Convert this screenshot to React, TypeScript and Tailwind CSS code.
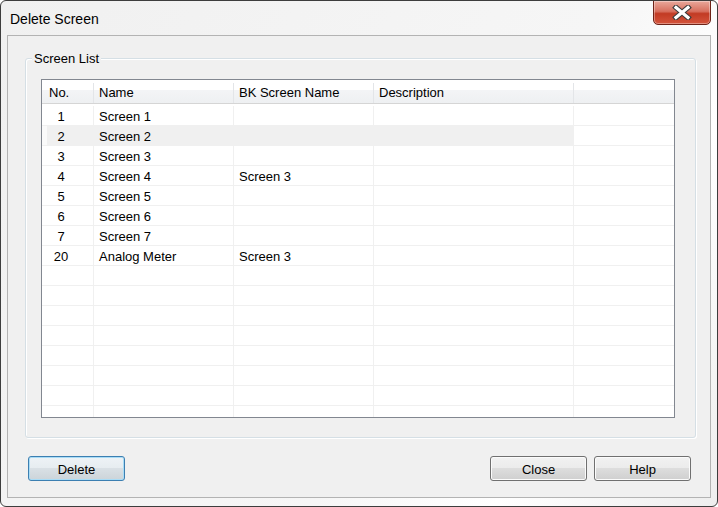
import React from 'react';

const rows = [
    { no: '1', name: 'Screen 1', bk: '' },
    { no: '2', name: 'Screen 2', bk: '', selected: true },
    { no: '3', name: 'Screen 3', bk: '' },
    { no: '4', name: 'Screen 4', bk: 'Screen 3' },
    { no: '5', name: 'Screen 5', bk: '' },
    { no: '6', name: 'Screen 6', bk: '' },
    { no: '7', name: 'Screen 7', bk: '' },
    { no: '20', name: 'Analog Meter', bk: 'Screen 3' },
];

const blanks = Array.from({ length: 8 }, (_, i) => ({ no: '', name: '', bk: '', key: i }));

function Button({ label, focused }: { label: string; focused?: boolean }) {
    return (
        <button
            className={`w-[97px] h-[25px] rounded-[3px] border text-[13px] text-black leading-none pt-[1px] ${focused
                ? 'border-[#3c7fb1] shadow-[inset_0_0_0_1px_#a9dcf6] bg-[linear-gradient(#eef3f6,#e6ecf0_50%,#d9e0e5_50%,#ccd4d9)]'
                : 'border-[#707070] shadow-[inset_0_0_0_1px_#fbfbfb] bg-[linear-gradient(#f2f2f2,#ebebeb_50%,#dddddd_50%,#cfcfcf)]'
                }`}
        >
            {label}
        </button>
    );
}

export default function App() {
    return (
        <div className="w-[718px] h-[507px] bg-white font-['Liberation_Sans',Arial,sans-serif]">
            <div className="w-[718px] h-[507px] flex flex-col rounded-[6px] border border-[#3d3d3d] bg-[linear-gradient(120deg,#f0f0f0_0%,#f6f6f6_60%,#ffffff_78%,#eeeeee_100%)] overflow-hidden">
                {/* Title bar */}
                <div className="h-[34px] flex items-start justify-between shrink-0">
                    <span className="pl-[9px] pt-[9px] text-[14px] text-black leading-[18px]">Delete Screen</span>
                    <div className="mr-[6px] -mt-[1px] w-[58px] h-[25px] rounded-b-[5px] border border-[#6e2318] bg-[linear-gradient(#e9a89b,#d7705f_45%,#c23b24_55%,#d4543c)] shadow-[inset_0_0_0_1px_rgba(255,255,255,0.35)] flex items-center justify-center">
                        <svg width="20" height="15" viewBox="0 0 20 15">
                            <path d="M4 2.5 L16 12.5 M16 2.5 L4 12.5" stroke="#3b3b3b" strokeWidth="5.4" strokeLinecap="square" />
                            <path d="M4 2.5 L16 12.5 M16 2.5 L4 12.5" stroke="#ffffff" strokeWidth="3.2" strokeLinecap="square" />
                        </svg>
                    </div>
                </div>

                {/* Client area */}
                <div className="mx-[6px] mb-[8px] flex-1 border border-[#b3b3b3] bg-[#f0f0f0] pl-[17px] pt-[22px]">
                    {/* Screen List group */}
                    <div className="relative w-[671px] h-[380px] rounded-[3px] border border-[#d5dfe5] shadow-[inset_1px_1px_0_#ffffff,1px_1px_0_#ffffff] pl-[15px] pt-[20px]">
                        <span className="absolute -top-[8px] left-[6px] px-[2px] bg-[#f0f0f0] text-[13px] leading-[15px] text-black">Screen List</span>

                        {/* List view */}
                        <div className="w-[634px] h-[339px] border border-[#828790] bg-white overflow-hidden text-[13px] text-black">
                            {/* Header */}
                            <div className="flex h-[24px] pt-[3px] border-b border-[#d5d5d5] bg-[linear-gradient(#ffffff,#ffffff_45%,#f3f4f6_45%,#eef0f2)]">
                                <div className="w-[52px] shrink-0 pl-[7px] flex items-center border-r border-[#e3e5e8]">No.</div>
                                <div className="w-[140px] shrink-0 pl-[5px] flex items-center border-r border-[#e3e5e8]">Name</div>
                                <div className="w-[140px] shrink-0 pl-[5px] flex items-center border-r border-[#e3e5e8]">BK Screen Name</div>
                                <div className="w-[200px] shrink-0 pl-[5px] flex items-center border-r border-[#e3e5e8]">Description</div>
                                <div className="flex-1" />
                            </div>

                            {/* Rows */}
                            <div className="pt-[2px]">
                                {[...rows, ...blanks].map((r, i) => {
                                    const sel = 'selected' in r && r.selected;
                                    return (
                                        <div key={i} className="flex h-[20px] border-b border-[#f0f0f0]">
                                            <div className={`w-[52px] shrink-0 pt-[2px] flex items-center border-r border-[#f0f0f0] ${sel ? 'bg-[linear-gradient(to_right,#fafafa_5px,#f0f0f0_5px)]' : ''}`}>
                                                <span className="w-[30px] ml-[4px] text-center">{r.no}</span>
                                            </div>
                                            <div className={`w-[140px] shrink-0 pl-[5px] pt-[2px] flex items-center border-r border-[#f0f0f0] ${sel ? 'bg-[#f0f0f0]' : ''}`}>{r.name}</div>
                                            <div className={`w-[140px] shrink-0 pl-[5px] pt-[2px] flex items-center border-r border-[#f0f0f0] ${sel ? 'bg-[#f0f0f0]' : ''}`}>{r.bk}</div>
                                            <div className={`w-[200px] shrink-0 pl-[5px] flex items-center border-r border-[#f0f0f0] ${sel ? 'bg-[#f0f0f0]' : ''}`} />
                                            <div className="flex-1" />
                                        </div>
                                    );
                                })}
                            </div>
                        </div>
                    </div>

                    {/* Buttons */}
                    <div className="mt-[18px] flex w-[663px] ml-[3px]">
                        <Button label="Delete" focused />
                        <div className="flex-1" />
                        <div className="flex gap-[7px]">
                            <Button label="Close" />
                            <Button label="Help" />
                        </div>
                    </div>
                </div>
            </div>
        </div>
    );
}
